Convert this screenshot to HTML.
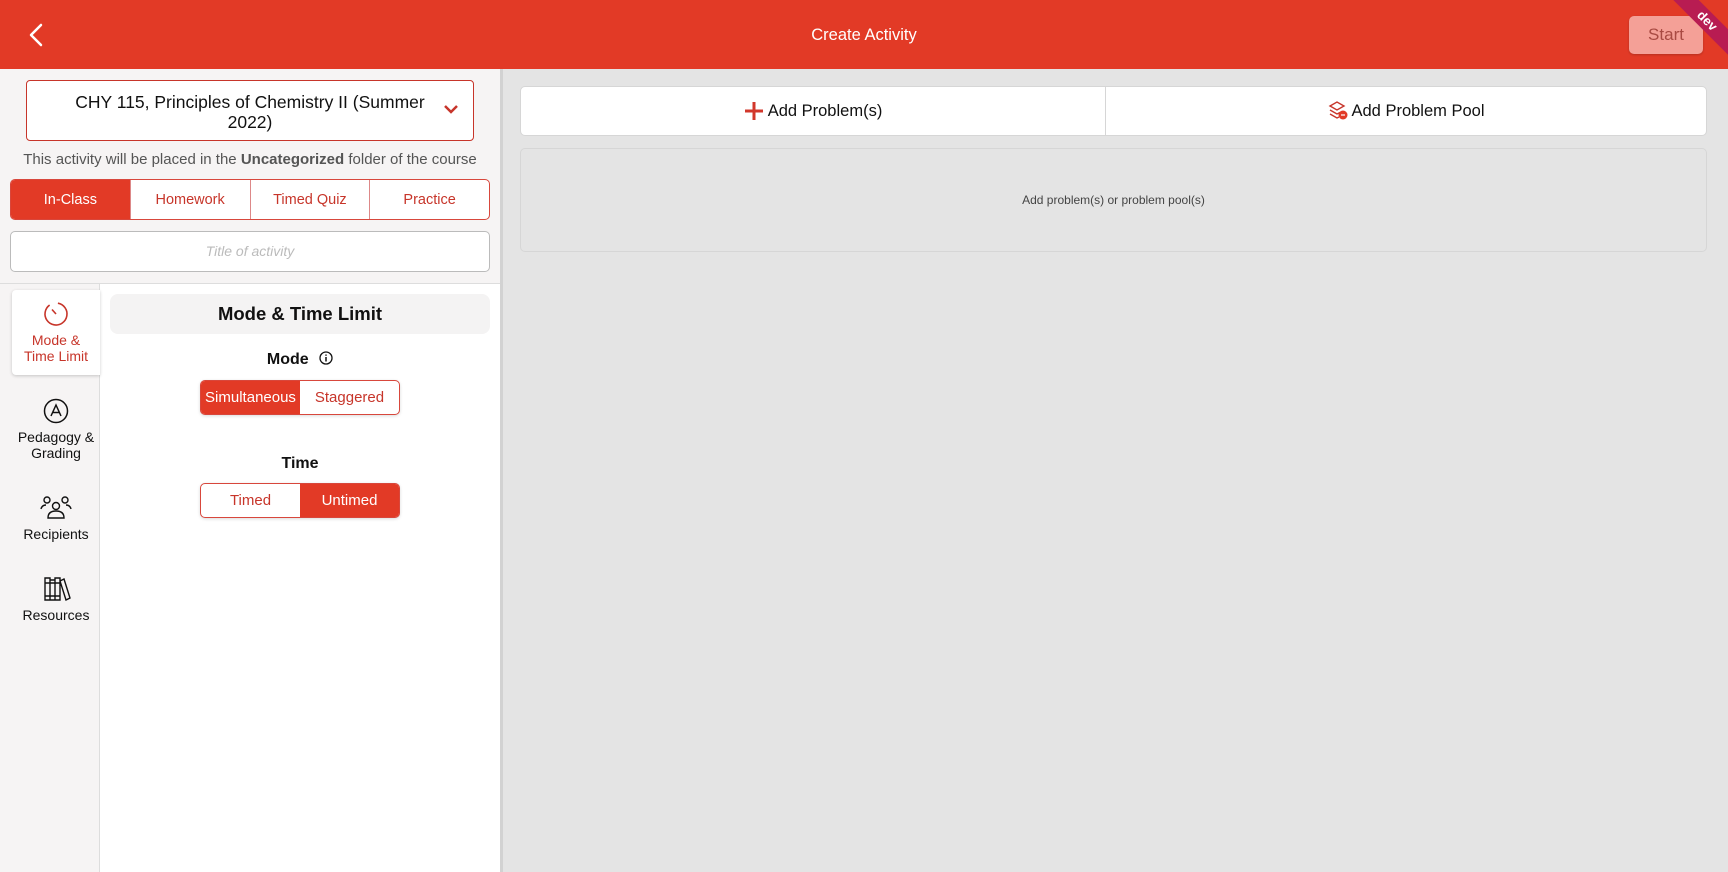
<!DOCTYPE html>
<html><head><meta charset="utf-8"><style>
*{box-sizing:border-box;margin:0;padding:0}
body{width:1728px;height:872px;overflow:hidden;font-family:"Liberation Sans",Arial,sans-serif;background:#e4e4e4;position:relative}
.abs{position:absolute}
.hdr{left:0;top:0;width:1728px;height:69px;background:#e23a26}
.title{left:0;width:1728px;top:26px;text-align:center;color:#fff;font-size:16.5px}
.start{left:1629px;top:16px;width:74px;height:38px;background:#f4a097;border-radius:5px;color:#a84a42;font-size:17px;text-align:center;line-height:38px;box-shadow:0 1px 2px rgba(0,0,0,.2)}
.ribbon{left:1647px;top:12px;width:120px;height:18px;background:#b81c52;transform:rotate(45deg);color:#fff;font-weight:bold;font-size:13px;text-align:center;line-height:18px}
.left{left:0;top:69px;width:500px;height:803px;background:#f6f4f4}
.divider{left:500px;top:69px;width:3px;height:803px;background:#d2d2d2}
.course{left:26px;top:80px;width:448px;height:61px;border:1.5px solid #c7352a;border-radius:4px;background:#fff;text-align:center;font-size:17.5px;color:#111;line-height:20px;padding-top:11px;padding-right:30px;padding-left:30px}
.help{left:0;width:500px;top:151px;text-align:center;font-size:15px;color:#555}
.tabs{left:10px;top:179px;width:480px;height:41px;border:1px solid #d8473c;border-radius:5px;background:#fff;display:flex;overflow:hidden}
.tabs div{flex:1;text-align:center;line-height:41px;font-size:14.5px;color:#c7352a;border-left:1px solid #d88}
.tabs div:first-child{border-left:0;background:#e23a26;color:#fff}
.inp{left:10px;top:231px;width:480px;height:41px;border:1px solid #bbb;border-radius:5px;background:#fff;text-align:center;line-height:39px;font-size:14px;color:#bbb;font-style:italic}
.hline{left:0;top:283px;width:500px;height:1px;background:#ddd}
.content{left:100px;top:284px;width:400px;height:588px;background:#fff}
.sidebarline{left:99px;top:284px;width:1px;height:588px;background:#ddd}
.active{left:12px;top:290px;width:88px;height:85px;background:#fff;border-radius:4px 0 0 4px;box-shadow:0 1px 3px rgba(0,0,0,.2)}
.slabel{width:100px;left:6px;text-align:center;font-size:14px;line-height:16px;color:#111}
.sec{left:110px;top:294px;width:380px;height:40px;background:#f4f3f3;border-radius:8px;text-align:center;line-height:40px;font-weight:bold;font-size:18.5px;color:#111}
.lbl{left:100px;width:400px;text-align:center;font-weight:bold;font-size:16px;color:#111}
.seg{left:200px;width:200px;height:35px;border:1px solid #d8473c;border-radius:5px;display:flex;overflow:hidden;background:#fff;box-shadow:0 1px 3px rgba(0,0,0,.15)}
.seg div{flex:1;text-align:center;line-height:33px;font-size:15px;color:#c7352a}
.seg .on{background:#e23a26;color:#fff}
.btnrow{left:520px;top:86px;width:1187px;height:50px;background:#fff;border:1px solid #d6d6d6;border-radius:5px;display:flex}
.btnrow div{display:flex;align-items:center;justify-content:center;font-size:16.5px;color:#111}
.empty{left:520px;top:148px;width:1187px;height:104px;border:1px solid #d6d6d6;border-radius:5px;text-align:center;line-height:102px;font-size:12px;color:#444}
</style></head><body>
<div class="abs hdr"></div>
<svg class="abs" style="left:26px;top:22px" width="20" height="26"><path d="M15 3 L5 13 L15 23" stroke="#fff" stroke-width="2.5" fill="none" stroke-linecap="round" stroke-linejoin="round"/></svg>
<div class="abs title">Create Activity</div>
<div class="abs start">Start</div>
<div class="abs" style="left:0;top:0;width:1728px;height:80px;overflow:hidden;pointer-events:none"><div class="abs ribbon">dev</div></div>

<div class="abs left"></div>
<div class="abs divider"></div>
<div class="abs course">CHY 115, Principles of Chemistry II (Summer 2022)</div>
<svg class="abs" style="left:443px;top:104px" width="16" height="12"><path d="M2 2 L8 8 L14 2" stroke="#c7352a" stroke-width="2.5" fill="none"/></svg>
<div class="abs help">This activity will be placed in the <b>Uncategorized</b> folder of the course</div>
<div class="abs tabs"><div>In-Class</div><div>Homework</div><div>Timed Quiz</div><div>Practice</div></div>
<div class="abs inp">Title of activity</div>
<div class="abs hline"></div>
<div class="abs content"></div>
<div class="abs sidebarline"></div>
<div class="abs active"></div>
<svg class="abs" style="left:43px;top:301px" width="26" height="26"><circle cx="13" cy="13" r="11" stroke="#c7352a" stroke-width="1.6" fill="none" stroke-dasharray="60 9" transform="rotate(-80 13 13)"/><path d="M13 13 L9 8.5" stroke="#c7352a" stroke-width="1.6"/></svg>
<div class="abs slabel" style="top:332px;color:#c7352a">Mode &amp;<br>Time Limit</div>
<svg class="abs" style="left:43px;top:398px" width="26" height="26"><circle cx="13" cy="13" r="11.5" stroke="#111" stroke-width="1.5" fill="none"/><path d="M8 18 L13 7 L18 18 M9.8 14.5 H16.2" stroke="#111" stroke-width="1.5" fill="none"/></svg>
<div class="abs slabel" style="top:429px">Pedagogy &amp;<br>Grading</div>
<svg class="abs" style="left:40px;top:494px" width="32" height="26"><circle cx="7" cy="6" r="3" stroke="#111" stroke-width="1.4" fill="none"/><circle cx="25" cy="6" r="3" stroke="#111" stroke-width="1.4" fill="none"/><circle cx="16" cy="12" r="3.5" stroke="#111" stroke-width="1.4" fill="none"/><path d="M1 15 Q2 11 6 11 M31 15 Q30 11 26 11 M8 24 Q8 17 16 17 Q24 17 24 24 Z" stroke="#111" stroke-width="1.4" fill="none"/></svg>
<div class="abs slabel" style="top:526px">Recipients</div>
<svg class="abs" style="left:43px;top:576px" width="28" height="26"><path d="M2 2 H7 V24 H2 Z M7 4 H12 V24 H7 Z M12 2 H17 V24 H12 Z M17 5 L21 3 L27 22 L23 24 Z M2 7 H17 M2 20 H17" stroke="#111" stroke-width="1.4" fill="none"/></svg>
<div class="abs slabel" style="top:607px">Resources</div>

<div class="abs sec">Mode &amp; Time Limit</div>
<div class="abs lbl" style="top:351px">Mode <svg style="vertical-align:-1px;margin-left:6px" width="14" height="14"><circle cx="7" cy="7" r="6" stroke="#111" stroke-width="1.3" fill="none"/><path d="M7 6 V10.5 M7 3.5 V4.8" stroke="#111" stroke-width="1.5"/></svg></div>
<div class="abs seg" style="top:380px"><div class="on">Simultaneous</div><div>Staggered</div></div>
<div class="abs lbl" style="top:455px">Time</div>
<div class="abs seg" style="top:483px"><div>Timed</div><div class="on">Untimed</div></div>

<div class="abs btnrow"><div style="width:585px;border-right:1px solid #d6d6d6"><svg width="20" height="20" style="margin-right:4px"><path d="M10 1 V19 M1 10 H19" stroke="#d2372b" stroke-width="3"/></svg>Add Problem(s)</div><div style="flex:1"><svg width="20" height="20" style="margin-right:4px"><path d="M2 5 L9 1 L16 5 L9 9 Z M2 9 L9 13 L13 11 M2 13 L9 17 L11 16" stroke="#c7352a" stroke-width="1.4" fill="none"/><circle cx="15" cy="14" r="4.5" fill="#e23a26"/><path d="M13 14 H17" stroke="#fff" stroke-width="1.2"/></svg>Add Problem Pool</div></div>
<div class="abs empty">Add problem(s) or problem pool(s)</div>
</body></html>
